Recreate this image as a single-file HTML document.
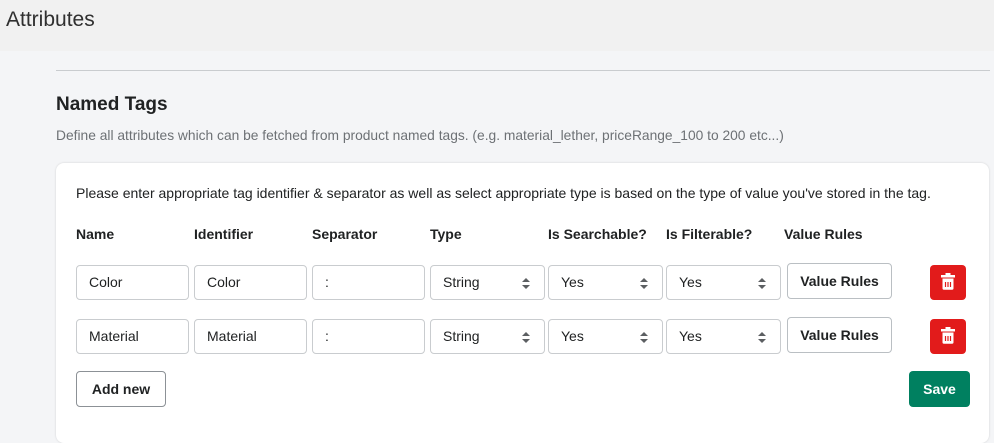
<html><head><style>
body{margin:0;width:994px;height:427px;overflow:hidden;background:#f4f5f7;font-family:"Liberation Sans",sans-serif;position:relative;color:#202223}
.a{position:absolute}
.hdr{left:0;top:0;width:994px;height:51px;background:#f1f1f1}
.in{position:absolute;height:35px;width:113px;box-sizing:border-box;border:1px solid #c9cccf;border-radius:4px;font-size:14px;line-height:33px;padding-left:12px;background:#fff}
.sel::after{content:"";position:absolute;right:14px;top:12px;border:4px solid transparent;border-bottom:4px solid #5c5f62;border-top:0}
.sel::before{content:"";position:absolute;right:14px;top:19px;border:4px solid transparent;border-top:4px solid #5c5f62;border-bottom:0}
.btn{position:absolute;box-sizing:border-box;border:1px solid #babfc3;border-radius:4px;background:#fff;font-size:14px;font-weight:bold;text-align:center;color:#202223}
.th{position:absolute;top:226px;font-size:14px;font-weight:bold}
.del{position:absolute;left:930px;width:36px;height:35px;background:#e21b1b;border-radius:4px}
</style></head><body>
<div class="a hdr"></div>
<div class="a" style="left:6px;top:8px;font-size:21px;color:#303030">Attributes</div>
<div class="a" style="left:56px;top:70px;width:934px;height:1px;background:#c9cccf"></div>
<div class="a" style="left:56px;top:94px;font-size:19px;font-weight:bold;color:#202223">Named Tags</div>
<div class="a" style="left:56px;top:128px;font-size:13.8px;color:#6d7175">Define all attributes which can be fetched from product named tags. (e.g. material_lether, priceRange_100 to 200 etc...)</div>
<div class="a" style="left:56px;top:163px;width:933px;height:280px;background:#fff;border-radius:8px;box-shadow:0 0 2px rgba(0,0,0,.15)"></div>
<div class="a" style="left:76px;top:185px;font-size:14px">Please enter appropriate tag identifier &amp; separator as well as select appropriate type is based on the type of value you've stored in the tag.</div>
<div class="th" style="left:76px">Name</div><div class="th" style="left:194px">Identifier</div><div class="th" style="left:312px">Separator</div><div class="th" style="left:430px">Type</div><div class="th" style="left:548px">Is Searchable?</div><div class="th" style="left:666px">Is Filterable?</div><div class="th" style="left:784px">Value Rules</div>

<div class="in" style="left:76px;top:265px">Color</div>
<div class="in" style="left:194px;top:265px">Color</div>
<div class="in" style="left:312px;top:265px">:</div>
<div class="in sel" style="left:430px;top:265px;width:115px">String</div>
<div class="in sel" style="left:548px;top:265px;width:115px">Yes</div>
<div class="in sel" style="left:666px;top:265px;width:115px">Yes</div>
<div class="btn" style="left:787px;top:263px;width:105px;height:36px;line-height:34px">Value Rules</div>
<div class="del" style="top:265px"><svg width="36" height="35" viewBox="0 0 36 35"><rect x="11" y="10" width="14" height="2.5" fill="#fff"/><rect x="15.5" y="8" width="5" height="2.5" fill="#fff"/><path d="M12.5 13.5h11v10a1.2 1.2 0 0 1-1.2 1.2h-8.6a1.2 1.2 0 0 1-1.2-1.2z" fill="#fff"/><path d="M15.5 17v5M18 17v5M20.5 17v5" stroke="#e21b1b" stroke-width="1.2"/></svg></div>

<div class="in" style="left:76px;top:319px">Material</div>
<div class="in" style="left:194px;top:319px">Material</div>
<div class="in" style="left:312px;top:319px">:</div>
<div class="in sel" style="left:430px;top:319px;width:115px">String</div>
<div class="in sel" style="left:548px;top:319px;width:115px">Yes</div>
<div class="in sel" style="left:666px;top:319px;width:115px">Yes</div>
<div class="btn" style="left:787px;top:317px;width:105px;height:36px;line-height:34px">Value Rules</div>
<div class="del" style="top:319px"><svg width="36" height="35" viewBox="0 0 36 35"><rect x="11" y="10" width="14" height="2.5" fill="#fff"/><rect x="15.5" y="8" width="5" height="2.5" fill="#fff"/><path d="M12.5 13.5h11v10a1.2 1.2 0 0 1-1.2 1.2h-8.6a1.2 1.2 0 0 1-1.2-1.2z" fill="#fff"/><path d="M15.5 17v5M18 17v5M20.5 17v5" stroke="#e21b1b" stroke-width="1.2"/></svg></div>

<div class="btn" style="left:76px;top:371px;width:90px;height:36px;line-height:34px;border-color:#8c9196">Add new</div>
<div class="btn" style="left:909px;top:371px;width:61px;height:36px;line-height:36px;border:0;background:#008060;color:#fff">Save</div>
</body></html>
